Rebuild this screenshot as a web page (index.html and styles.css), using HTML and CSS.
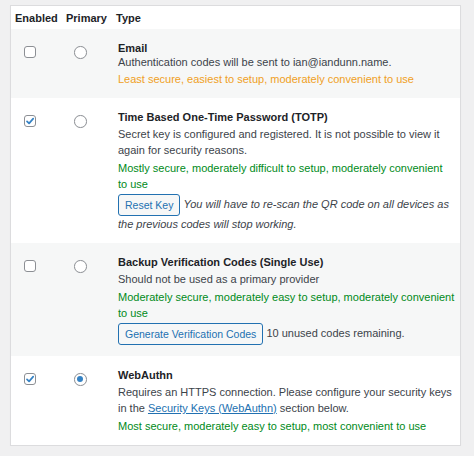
FILE: index.html
```html
<!DOCTYPE html>
<html lang="en">
<head>
<meta charset="utf-8">
<title>Two-Factor Options</title>
<link rel="stylesheet" href="styles.css">
</head>
<body>
<table class="methods">
  <thead>
    <tr>
      <th class="col-enabled">Enabled</th>
      <th class="col-primary">Primary</th>
      <th class="col-type">Type</th>
    </tr>
  </thead>
  <tbody>
    <tr class="alt">
      <td class="check"><span class="cb"></span></td>
      <td class="check radio-cell"><span class="radio"></span></td>
      <td class="type">
        <div class="title">Email</div>
        <p class="desc tight">Authentication codes will be sent to ian@iandunn.name.</p>
        <p class="rating warn">Least secure, easiest to setup, moderately convenient to use</p>
      </td>
    </tr>
    <tr>
      <td class="check"><span class="cb checked"><svg viewBox="0 0 12 12" width="12" height="12"><path d="M3 6.3 L5.1 8.4 L9.2 3.6" fill="none" stroke="#3582c4" stroke-width="1.7" stroke-linecap="round" stroke-linejoin="round"/></svg></span></td>
      <td class="check radio-cell"><span class="radio"></span></td>
      <td class="type">
        <div class="title">Time Based One-Time Password (TOTP)</div>
        <p class="desc">Secret key is configured and registered. It is not possible to view it again for security reasons.</p>
        <p class="rating ok">Mostly secure, moderately difficult to setup, moderately convenient to use</p>
        <p class="actions"><span class="button">Reset Key</span> <em class="note">You will have to re-scan the QR code on all devices as the previous codes will stop working.</em></p>
      </td>
    </tr>
    <tr class="alt">
      <td class="check"><span class="cb"></span></td>
      <td class="check radio-cell"><span class="radio"></span></td>
      <td class="type">
        <div class="title">Backup Verification Codes (Single Use)</div>
        <p class="desc">Should not be used as a primary provider</p>
        <p class="rating ok">Moderately secure, moderately easy to setup, moderately convenient to use</p>
        <p class="actions"><span class="button">Generate Verification Codes</span> 10 unused codes remaining.</p>
      </td>
    </tr>
    <tr>
      <td class="check"><span class="cb checked"><svg viewBox="0 0 12 12" width="12" height="12"><path d="M3 6.3 L5.1 8.4 L9.2 3.6" fill="none" stroke="#3582c4" stroke-width="1.7" stroke-linecap="round" stroke-linejoin="round"/></svg></span></td>
      <td class="check radio-cell"><span class="radio checked"><span class="dot"></span></span></td>
      <td class="type">
        <div class="title">WebAuthn</div>
        <p class="desc">Requires an HTTPS connection. Please configure your security keys in the <a href="#" class="link">Security Keys (WebAuthn)</a> section below.</p>
        <p class="rating ok">Most secure, moderately easy to setup, most convenient to use</p>
      </td>
    </tr>
  </tbody>
</table>
</body>
</html>
```
FILE: styles.css
```css
html, body {
  margin: 0;
  background: #f0f0f1;
}
body {
  padding: 5px 0 0 10px;
  font-family: "Liberation Sans", Arial, sans-serif;
  font-size: 11px;
  line-height: 16px;
  color: #3c434a;
}
.methods {
  width: 451px;
  border-collapse: separate;
  border-spacing: 0;
  border: 1px solid #dcdcde;
  background: #fff;
  box-shadow: 0 1px 1px rgba(0, 0, 0, 0.04);
  table-layout: fixed;
}
.methods th {
  box-sizing: border-box;
  text-align: left;
  font-weight: 700;
  color: #1d2327;
  padding: 4px 0 3px 4px;
  vertical-align: top;
}
.col-enabled { width: 51px; }
.col-primary { width: 50px; }
.methods td {
  vertical-align: top;
  padding: 0;
}
.methods tr.alt td {
  background: #f6f7f7;
}
.methods td.check {
  padding: 17px 0 0 13px;
}
.methods td.radio-cell {
  padding-left: 12px;
}
.methods td.type {
  padding: 11px 5.4px 11px 6px;
}
.cb {
  display: block;
  box-sizing: border-box;
  width: 12px;
  height: 12px;
  border: 1px solid #8c8f94;
  border-radius: 3px;
  background: #fff;
  position: relative;
}
.cb svg {
  position: absolute;
  left: -1px;
  top: -1px;
}
.radio {
  display: flex;
  align-items: center;
  justify-content: center;
  box-sizing: border-box;
  width: 12.5px;
  height: 12.5px;
  border: 1px solid #8c8f94;
  border-radius: 50%;
  background: #fff;
}
.radio .dot {
  width: 6px;
  height: 6px;
  border-radius: 50%;
  background: #3582c4;
}
.title {
  font-weight: 700;
  color: #1d2327;
}
.methods p {
  margin: 1px 0 0;
}
.methods p.desc.tight {
  margin-top: -2px;
}
.methods p.rating {
  margin-top: 2px;
}
.methods tr:first-child p.rating {
  margin-top: 1px;
}
.warn { color: #f0a024; }
.ok { color: #008a20; }
.methods p.actions {
  margin-top: 2px;
}
.button {
  display: inline-block;
  box-sizing: border-box;
  height: 22px;
  line-height: 20px;
  padding: 0 6px;
  border: 1px solid #2271b1;
  border-radius: 3px;
  background: #f6f7f7;
  color: #2271b1;
  font-size: 10.5px;
  vertical-align: middle;
}
.note {
  font-style: italic;
}
.link {
  color: #2271b1;
  text-decoration: underline;
}
```
